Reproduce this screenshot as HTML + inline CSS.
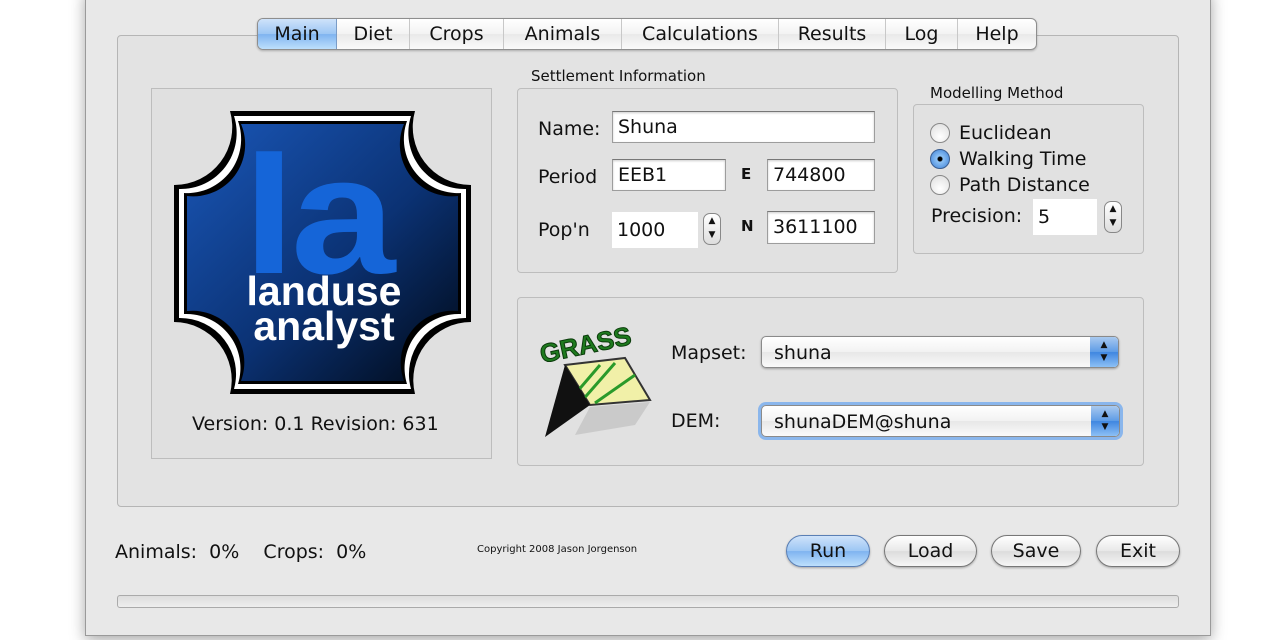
<!DOCTYPE html>
<html><head><style>
body{margin:0;width:1280px;height:640px;background:#fff;position:relative;overflow:hidden;font-family:"DejaVu Sans","Liberation Sans",sans-serif;color:#111}
.a{position:absolute}
.win{left:85px;top:-10px;width:1124px;height:644px;background:#e8e8e8;border:1px solid #9a9a9a;box-shadow:0 4px 14px rgba(0,0,0,.35)}
.box{position:absolute;background:#e1e1e1;border:1px solid #bdbdbd;border-radius:4px}
.lbl{position:absolute;font-size:19px;white-space:nowrap}
.fld{position:absolute;background:#fff;border:1px solid #9d9d9d;border-top-color:#777;font-size:19px;line-height:30px;padding-left:5px;box-sizing:border-box;box-shadow:inset 0 1px 2px rgba(0,0,0,.2)}
.step{position:absolute;width:18px;height:32px;border:1px solid #888;border-radius:7px;background:linear-gradient(#fff,#ddd);font-size:9px;text-align:center;line-height:14px;box-sizing:border-box}
.btn{position:absolute;height:30px;border:1px solid #777;border-radius:16px;background:linear-gradient(#fff,#e8e8e8 50%,#dcdcdc 51%,#f6f6f6);font-size:19px;text-align:center;line-height:30px;box-shadow:0 1px 2px rgba(0,0,0,.3)}
.pop{position:absolute;height:32px;border:1px solid #8a8a8a;border-radius:5px;background:linear-gradient(#fff,#f2f2f2 50%,#e7e7e7 51%,#fafafa);font-size:19px;line-height:32px;padding-left:12px;box-sizing:border-box;box-shadow:0 1px 2px rgba(0,0,0,.3)}
.pop i{position:absolute;right:0;top:0;bottom:0;width:28px;border-radius:0 4px 4px 0;background:linear-gradient(#a9c9ef,#5d9be6 50%,#3f86e0 51%,#8cc0f5);font-style:normal;font-size:9px;line-height:13px;text-align:center;padding-top:2px;box-sizing:border-box}
.radio{position:absolute;width:20px;height:20px;border-radius:50%;border:1px solid #888;background:radial-gradient(circle at 50% 70%,#fff,#ddd);box-sizing:border-box}
</style></head><body>
<div class="a win"></div>
<div class="box" style="left:117px;top:35px;width:1060px;height:470px;background:#e3e3e3;border-color:#b5b5b5"></div>
<!-- tabs -->
<div class="a" style="left:257px;top:18px;width:778px;height:30px;border:1px solid #8e8e8e;border-radius:6px;background:linear-gradient(#fff,#f3f3f3 50%,#e9e9e9 51%,#fafafa);box-shadow:0 1px 2px rgba(0,0,0,.25);font-size:19px;line-height:31px;overflow:hidden">
<div class="a" style="left:0;width:78px;height:30px;background:linear-gradient(#cfe3fa,#9cc6f4 50%,#7fb3f0 51%,#bde0fc);border-right:1px solid #7a9cc7;text-align:center">Main</div>
<div class="a" style="left:79px;width:72px;text-align:center;border-right:1px solid #c8c8c8">Diet</div>
<div class="a" style="left:152px;width:93px;text-align:center;border-right:1px solid #c8c8c8">Crops</div>
<div class="a" style="left:246px;width:117px;text-align:center;border-right:1px solid #c8c8c8">Animals</div>
<div class="a" style="left:364px;width:156px;text-align:center;border-right:1px solid #c8c8c8">Calculations</div>
<div class="a" style="left:521px;width:106px;text-align:center;border-right:1px solid #c8c8c8">Results</div>
<div class="a" style="left:628px;width:71px;text-align:center;border-right:1px solid #c8c8c8">Log</div>
<div class="a" style="left:700px;width:78px;text-align:center">Help</div>
</div>
<!-- logo panel -->
<div class="box" style="left:151px;top:88px;width:339px;height:369px;border-radius:0;background:#e0e0e0"></div>
<div class="box" style="left:517px;top:88px;width:379px;height:183px"></div>
<div class="box" style="left:913px;top:104px;width:229px;height:148px"></div>
<div class="box" style="left:517px;top:297px;width:625px;height:167px"></div>
<svg class="a" style="left:0;top:0" width="1280" height="640">
<defs><linearGradient id="g" x1="0" y1="0" x2="1" y2="1"><stop offset="0" stop-color="#1a57b8"/><stop offset=".55" stop-color="#0b3274"/><stop offset="1" stop-color="#000814"/></linearGradient></defs>
<path d="M230 111 L415 111 A58 58 0 0 0 471 185 L471 322 A58 58 0 0 0 415 394 L230 394 A58 58 0 0 0 174 322 L174 185 A58 58 0 0 0 230 111Z" fill="#000"/>
<path d="M234 116 L411 116 A56 56 0 0 0 466 189 L466 318 A56 56 0 0 0 411 389 L234 389 A56 56 0 0 0 179 318 L179 189 A56 56 0 0 0 234 116Z" fill="#fff"/>
<path d="M238 121 L407 121 A54 54 0 0 0 461 193 L461 314 A54 54 0 0 0 407 384 L238 384 A54 54 0 0 0 184 314 L184 193 A54 54 0 0 0 238 121Z" fill="#000"/>
<path d="M241 124 L404 124 A52 52 0 0 0 458 196 L458 311 A52 52 0 0 0 404 381 L241 381 A52 52 0 0 0 187 311 L187 196 A52 52 0 0 0 241 124Z" fill="url(#g)"/>
<text x="243" y="273" font-family="Liberation Sans" font-weight="bold" font-size="168" fill="#1565d8" transform="translate(243 273) scale(1.12 1) translate(-243 -273)" letter-spacing="-4">la</text>
<text x="324" y="305" text-anchor="middle" font-family="Liberation Sans" font-weight="bold" font-size="41" fill="#fff">landuse</text>
<text x="324" y="340" text-anchor="middle" font-family="Liberation Sans" font-weight="bold" font-size="41" fill="#fff">analyst</text>
<!-- grass logo -->
<g transform="translate(540,325)">
<text x="0" y="32" font-family="Liberation Sans" font-weight="bold" font-size="26" fill="#1e7a1e" stroke="#0a3a0a" stroke-width="1" transform="rotate(-12 30 25)">GRASS</text>
<path d="M25 40 L85 33 L110 75 L50 80Z" fill="#f1f0a8" stroke="#333" stroke-width="2"/>
<path d="M30 75 L60 40 M40 78 L75 38 M55 78 L95 50" stroke="#2a9a2a" stroke-width="3"/>
<path d="M25 40 L5 112 L50 80Z" fill="#111"/>
<path d="M50 82 L110 77 L95 100 L35 110Z" fill="#bbb" opacity=".6"/>
</g>
</svg>
<div class="lbl" style="left:192px;top:413px">Version: 0.1 Revision: 631</div>
<!-- settlement -->
<div class="lbl" style="left:531px;top:67px;font-size:15px">Settlement Information</div>
<div class="lbl" style="left:538px;top:118px">Name:</div>
<div class="fld" style="left:612px;top:111px;width:263px;height:32px">Shuna</div>
<div class="lbl" style="left:538px;top:166px">Period</div>
<div class="fld" style="left:612px;top:159px;width:114px;height:32px">EEB1</div>
<div class="lbl" style="left:741px;top:165px;font-weight:bold;font-size:15px">E</div>
<div class="fld" style="left:767px;top:159px;width:108px;height:32px">744800</div>
<div class="lbl" style="left:538px;top:219px">Pop'n</div>
<div class="fld" style="left:612px;top:212px;width:86px;height:36px;line-height:36px;border:none;box-shadow:none">1000</div>
<div class="step" style="left:703px;top:213px">▲<br>▼</div>
<div class="lbl" style="left:741px;top:217px;font-weight:bold;font-size:15px">N</div>
<div class="fld" style="left:767px;top:211px;width:108px;height:33px">3611100</div>
<!-- modelling -->
<div class="lbl" style="left:930px;top:84px;font-size:15px">Modelling Method</div>
<div class="radio" style="left:930px;top:123px"></div><div class="lbl" style="left:959px;top:122px">Euclidean</div>
<div class="radio" style="left:930px;top:149px;background:radial-gradient(circle,#000 2px,#8fc3f5 3px,#3b7fd6);border-color:#3a5d8f"></div><div class="lbl" style="left:959px;top:148px">Walking Time</div>
<div class="radio" style="left:930px;top:175px"></div><div class="lbl" style="left:959px;top:174px">Path Distance</div>
<div class="lbl" style="left:931px;top:205px">Precision:</div>
<div class="fld" style="left:1033px;top:199px;width:64px;height:36px;line-height:36px;border:none;box-shadow:none">5</div>
<div class="step" style="left:1104px;top:201px">▲<br>▼</div>
<!-- grass panel -->
<div class="lbl" style="left:671px;top:342px">Mapset:</div>
<div class="pop" style="left:761px;top:336px;width:358px">shuna<i>▲<br>▼</i></div>
<div class="lbl" style="left:671px;top:410px">DEM:</div>
<div class="pop" style="left:761px;top:405px;width:359px;box-shadow:0 0 0 3px #8ab6ec">shunaDEM@shuna<i>▲<br>▼</i></div>
<!-- bottom -->
<div class="lbl" style="left:115px;top:541px">Animals:&nbsp; 0%&nbsp;&nbsp;&nbsp; Crops:&nbsp; 0%</div>
<div class="lbl" style="left:477px;top:544px;font-size:10px">Copyright 2008 Jason Jorgenson</div>
<div class="btn" style="left:786px;top:535px;width:82px;background:linear-gradient(#cfe3fa,#9cc6f4 50%,#7fb3f0 51%,#bde0fc);border-color:#5a7fb5">Run</div>
<div class="btn" style="left:884px;top:535px;width:91px">Load</div>
<div class="btn" style="left:991px;top:535px;width:88px">Save</div>
<div class="btn" style="left:1096px;top:535px;width:82px">Exit</div>
<div class="a" style="left:117px;top:595px;width:1060px;height:11px;border:1px solid #aaa;border-radius:3px;background:linear-gradient(#ddd,#eee)"></div>
</body></html>
